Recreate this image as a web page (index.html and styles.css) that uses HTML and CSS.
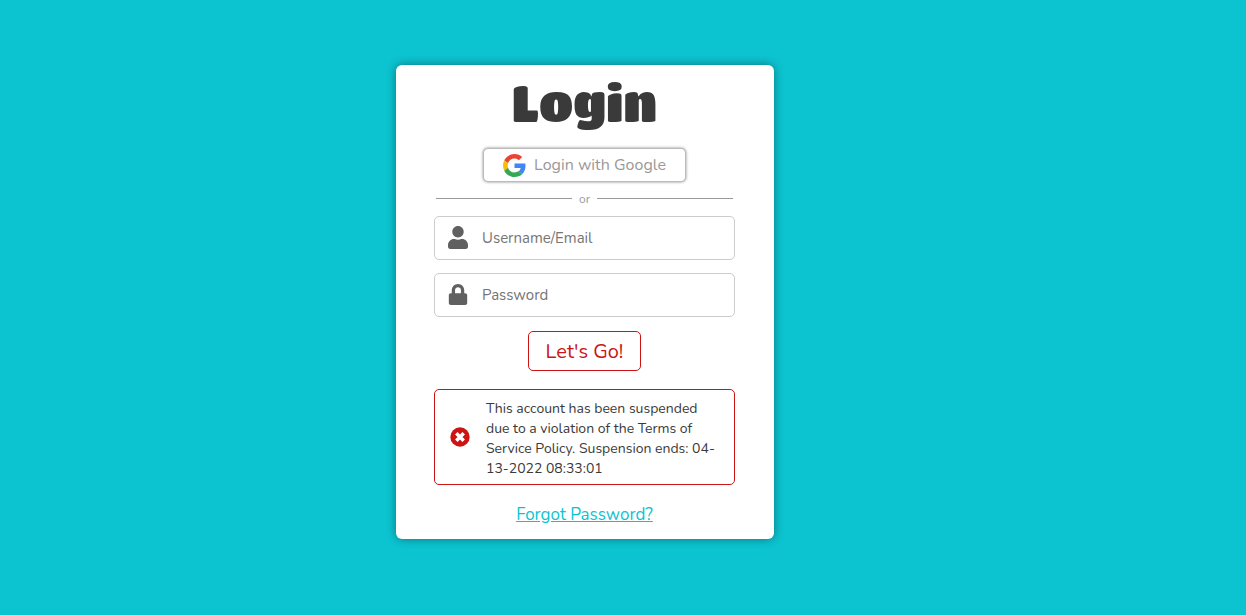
FILE: index.html
```html
<!DOCTYPE html>
<html lang="en">
<head>
<meta charset="utf-8">
<meta name="viewport" content="width=device-width, initial-scale=1">
<title>Login</title>
<link rel="stylesheet" href="styles.css">
</head>
<body>
<main class="page">
  <section class="card">
    <h1 class="title">Login</h1>
    <button class="google" type="button">
      <svg class="google-logo" viewBox="0 0 48 48" aria-hidden="true">
        <path fill="#ea4335" d="M24 9.5c3.54 0 6.71 1.22 9.21 3.6l6.85-6.85C35.9 2.38 30.47 0 24 0 14.62 0 6.51 5.38 2.56 13.22l7.98 6.19C12.43 13.72 17.74 9.5 24 9.5z"/>
        <path fill="#4285f4" d="M46.98 24.55c0-1.57-.15-3.09-.38-4.55H24v9.02h12.94c-.58 2.96-2.26 5.48-4.78 7.18l7.73 6c4.51-4.18 7.09-10.36 7.09-17.65z"/>
        <path fill="#fbbc05" d="M10.53 28.59c-.48-1.45-.76-2.99-.76-4.59s.27-3.14.76-4.59l-7.98-6.19C.92 16.46 0 20.12 0 24c0 3.88.92 7.54 2.56 10.78l7.97-6.19z"/>
        <path fill="#34a853" d="M24 48c6.48 0 11.93-2.13 15.89-5.81l-7.73-6c-2.15 1.45-4.92 2.3-8.16 2.3-6.26 0-11.57-4.22-13.47-9.91l-7.98 6.19C6.51 42.62 14.62 48 24 48z"/>
      </svg>
      <span>Login with Google</span>
    </button>
    <div class="divider">or</div>
    <form class="form">
      <label class="field">
        <svg class="field-icon" viewBox="0 0 448 512" aria-hidden="true"><path d="M224 256c70.7 0 128-57.3 128-128S294.700 0 224 0 96 57.300 96 128s57.300 128 128 128zm89.600 32h-16.700c-22.200 10.200-46.900 16-72.900 16s-50.600-5.800-72.900-16h-16.700C60.200 288 0 348.200 0 422.400V464c0 26.500 21.500 48 48 48h352c26.500 0 48-21.500 48-48v-41.600c0-74.200-60.200-134.400-134.400-134.400z"/></svg>
        <input class="input" type="text" placeholder="Username/Email" aria-label="Username/Email">
      </label>
      <label class="field">
        <svg class="field-icon lock" viewBox="0 0 448 512" aria-hidden="true"><path d="M400 224h-24v-72C376 68.200 307.800 0 224 0S72 68.200 72 152v72H48c-26.500 0-48 21.500-48 48v192c0 26.500 21.500 48 48 48h352c26.500 0 48-21.500 48-48V272c0-26.500-21.500-48-48-48zm-104 0H152v-72c0-39.700 32.300-72 72-72s72 32.300 72 72v72z"/></svg>
        <input class="input" type="password" placeholder="Password" aria-label="Password">
      </label>
      <button class="submit" type="submit">Let's Go!</button>
      <div class="error" role="alert">
        <svg class="error-icon" viewBox="0 0 20 20" aria-hidden="true"><circle cx="10" cy="10" r="9.700"/><path d="M6.300 6.300l7.400 7.400M13.700 6.300l-7.400 7.400"/></svg>
        <p class="error-text">This account has been suspended due to a violation of the Terms of Service Policy. Suspension ends: 04-13-2022 08:33:01</p>
      </div>
    </form>
    <a class="forgot" href="#">Forgot Password?</a>
  </section>
</main>
</body>
</html>
```
FILE: styles.css
```css
* { box-sizing: border-box; }

body {
  margin: 0;
  min-height: 100vh;
  background: #0cc3d0;
  color: #3a3a3a;
  font-family: Nunito, "Open Sans", sans-serif;
}

.page {
  max-width: 1170px;
  padding: 65px 16px;
}

.card {
  display: flex;
  flex-direction: column;
  align-items: center;
  max-width: 378px;
  margin: 0 auto;
  padding: 9px 39px 12px 38px;
  background: #fff;
  border-radius: 6px;
  box-shadow: 0 0 10px rgba(0, 0, 0, 0.4);
}

.title {
  margin: 0;
  font-family: "Titan One", Inter, sans-serif;
  font-size: 50px;
  font-weight: 400;
  line-height: 56px;
}

.google {
  display: flex;
  align-items: center;
  gap: 8px;
  height: 34px;
  margin-top: 18px;
  padding: 0 19px;
  border: 1px solid #bbb;
  border-radius: 5px;
  background: #fff;
  box-shadow: 0 0 3px #888;
  color: #999;
  font: inherit;
  font-size: 16px;
}

.google-logo {
  width: 23px;
  height: 23px;
}

.divider {
  display: flex;
  align-items: center;
  align-self: stretch;
  gap: 7px;
  margin: 8px 2px;
  color: #999;
  font-size: 12px;
  line-height: 18px;
}

.divider::before,
.divider::after {
  content: "";
  flex: 1;
  height: 1px;
  margin-bottom: 2px;
  background: #999;
}

.form {
  display: flex;
  flex-direction: column;
  align-items: center;
  width: 100%;
}

.field {
  display: flex;
  align-items: center;
  width: 100%;
  height: 44px;
  margin-bottom: 13px;
  padding-left: 13px;
  border: 1px solid #ccc;
  border-radius: 5px;
}

.field-icon {
  width: 20px;
  height: 23px;
  margin-bottom: 2px;
  fill: #606060;
}

.lock {
  height: 21px;
}

.input {
  flex: 1;
  min-width: 0;
  padding: 0 14px;
  border: 0;
  outline: 0;
  background: none;
  font: inherit;
  font-size: 15px;
}

.input::placeholder {
  color: #757575;
}

.submit {
  height: 40px;
  margin-top: 1px;
  padding: 0 17px;
  border: 1px solid #cc1414;
  border-radius: 5px;
  background: #fff;
  color: #cc1414;
  font: inherit;
  font-size: 20px;
}

.error {
  display: flex;
  align-items: center;
  gap: 16px;
  width: 100%;
  margin-top: 18px;
  padding: 9px 12px 5px 15px;
  border: 1px solid #cc1414;
  border-radius: 5px;
}

.error-icon {
  flex: none;
  width: 20px;
  height: 20px;
  margin-bottom: 4px;
  fill: #cc1414;
}

.error-icon path {
  stroke: #fff;
  stroke-width: 3.6;
}

.error-text {
  margin: 0;
  font-size: 14px;
  line-height: 20px;
}

.forgot {
  margin-top: 17px;
  color: #0cc3d0;
  font-size: 17px;
  line-height: 25px;
}
```
